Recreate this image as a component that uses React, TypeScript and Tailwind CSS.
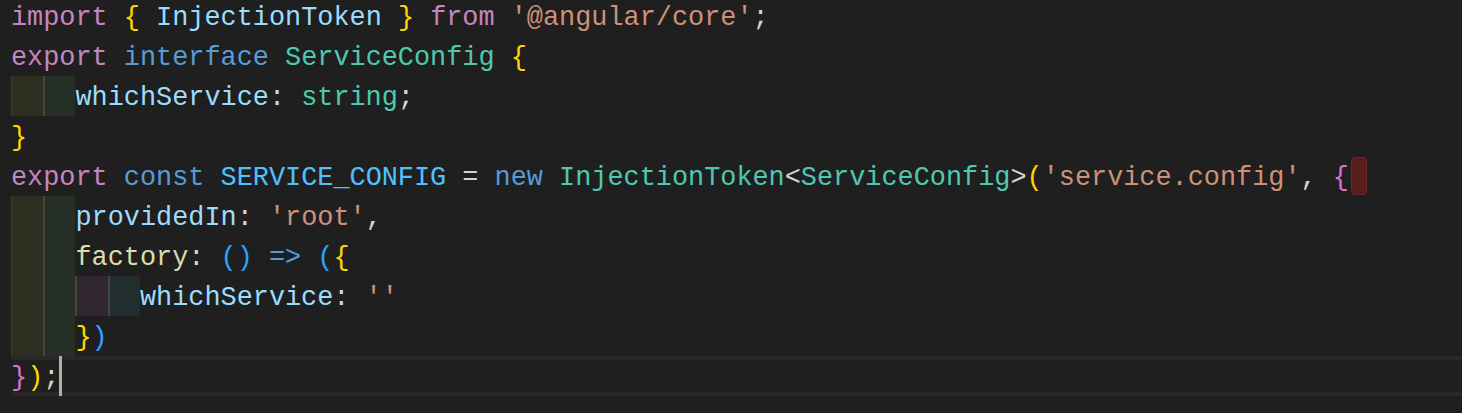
const kw = "text-[#c586c0]";
const st = "text-[#569cd6]";
const vr = "text-[#9cdcfe]";
const ty = "text-[#4ec9b0]";
const pn = "text-[#d4d4d4]";
const str = "text-[#ce9178]";
const cn = "text-[#4fc1ff]";
const fn = "text-[#dcdcaa]";
const b1 = "text-[#ffd700]";
const b2 = "text-[#da70d6]";
const b3 = "text-[#2ba3ff]";

const guideBg = ["bg-[#2f2f21]", "bg-[#262f26]", "bg-[#2f262f]", "bg-[#222d2d]"];

function T({ c, children }: { c: string; children: React.ReactNode }) {
  return <span className={c}>{children}</span>;
}

// indent-rainbow blocks, 2 spaces per level
function Indent({ levels }: { levels: number }) {
  return (
    <>
      {Array.from({ length: levels }).map((_, i) => (
        <span
          key={i}
          className={`inline-block w-[2ch] h-[40px] align-top ${guideBg[i]} ${
            i === 0 ? "shadow-[inset_1px_0_0_#3c3c36]" : "shadow-[inset_2px_0_0_#46463f]"
          }`}
        />
      ))}
    </>
  );
}

function Line({ children, current }: { children: React.ReactNode; current?: boolean }) {
  return (
    <div
      className={`h-[40px] whitespace-pre ${
        current ? "shadow-[inset_0_4px_0_#282828,inset_0_-4px_0_#282828]" : ""
      }`}
    >
      {children}
    </div>
  );
}

export default function App() {
  return (
    <div className="w-full h-[413px] overflow-hidden bg-[#1f1f1f] pl-[11px]">
      <div className="-mt-1 font-['Liberation_Mono','DejaVu_Sans_Mono',monospace] text-[26.87px] leading-[44px]">
        <Line>
          <T c={kw}>import</T> <T c={b1}>{"{"}</T> <T c={vr}>InjectionToken</T> <T c={b1}>{"}"}</T>{" "}
          <T c={kw}>from</T> <T c={str}>'@angular/core'</T>
          <T c={pn}>;</T>
        </Line>
        <Line>
          <T c={kw}>export</T> <T c={st}>interface</T> <T c={ty}>ServiceConfig</T> <T c={b1}>{"{"}</T>
        </Line>
        <Line>
          <Indent levels={2} />
          <T c={vr}>whichService</T>
          <T c={pn}>: </T>
          <T c={ty}>string</T>
          <T c={pn}>;</T>
        </Line>
        <Line>
          <T c={b1}>{"}"}</T>
        </Line>
        <Line>
          <T c={kw}>export</T> <T c={st}>const</T> <T c={cn}>SERVICE_CONFIG</T> <T c={pn}>=</T>{" "}
          <T c={st}>new</T> <T c={ty}>InjectionToken</T>
          <T c={pn}>{"<"}</T>
          <T c={ty}>ServiceConfig</T>
          <T c={pn}>{">"}</T>
          <T c={b1}>(</T>
          <T c={str}>'service.config'</T>
          <T c={pn}>, </T>
          <T c={b2}>{"{"}</T>
          <span className="inline-block align-top ml-[2px] mt-[1px] w-[16px] h-[38px] rounded-[4px] bg-[#5a1d1d] border border-[#6e2626]" />
        </Line>
        <Line>
          <Indent levels={2} />
          <T c={vr}>providedIn</T>
          <T c={pn}>: </T>
          <T c={str}>'root'</T>
          <T c={pn}>,</T>
        </Line>
        <Line>
          <Indent levels={2} />
          <T c={fn}>factory</T>
          <T c={pn}>: </T>
          <T c={b3}>()</T> <T c={st}>{"=>"}</T> <T c={b3}>(</T>
          <T c={b1}>{"{"}</T>
        </Line>
        <Line>
          <Indent levels={4} />
          <T c={vr}>whichService</T>
          <T c={pn}>: </T>
          <T c={str}>''</T>
        </Line>
        <Line>
          <Indent levels={2} />
          <T c={b1}>{"}"}</T>
          <T c={b3}>)</T>
        </Line>
        <Line current>
          <T c={b2}>{"}"}</T>
          <T c={b1}>)</T>
          <T c={pn}>;</T>
          <span className="inline-block align-top w-[3px] h-[40px] bg-[#aeafad]" />
        </Line>
      </div>
    </div>
  );
}
